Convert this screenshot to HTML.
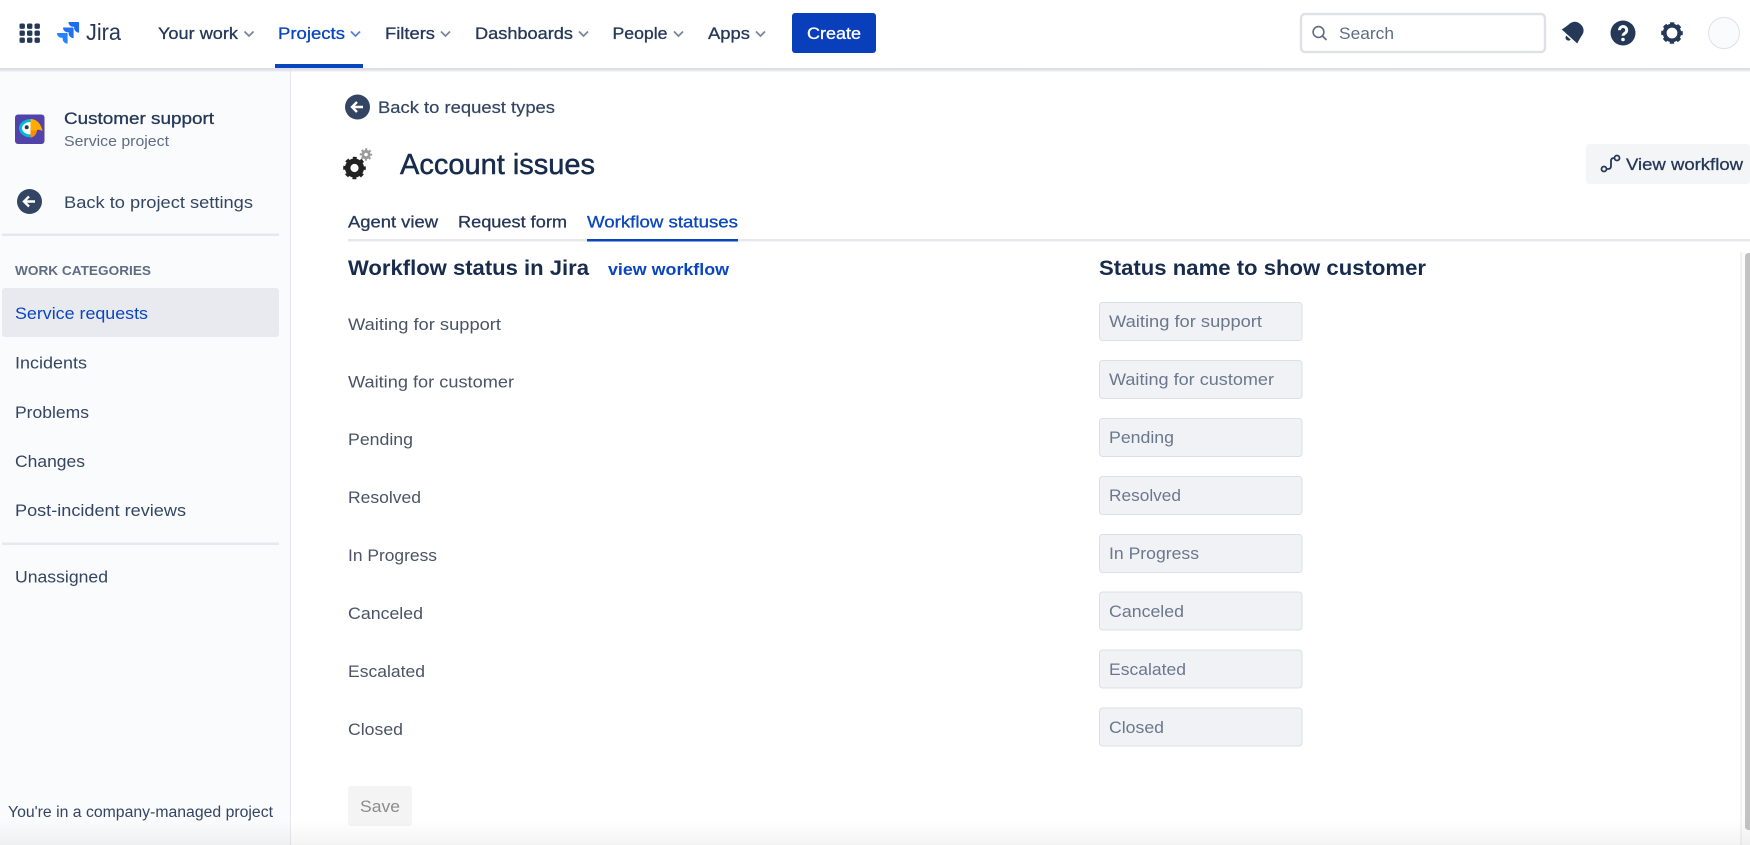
<!DOCTYPE html>
<html lang="en"><head><meta charset="utf-8"><title>Account issues</title>
<style>
html,body{margin:0;padding:0;background:#fff;width:1750px;height:845px;overflow:hidden}
svg{display:block;filter:blur(.3px)}
text{font-family:"Liberation Sans",Arial,sans-serif;font-size:17px;fill:#253858;white-space:pre}
.m{stroke:#253858;stroke-width:.3px}
.b{fill:#0a45c0;stroke:#0a45c0;stroke-width:.3px}
.r{fill:#4a5464}
.i{fill:#6b778c}
.h{font-weight:bold;font-size:21px;fill:#172b4d}
.inp{fill:#f1f2f6;stroke:#dcdfe6;stroke-width:1}
.ch{fill:none;stroke:#7a869a;stroke-width:1.8}
</style></head><body>
<svg xmlns="http://www.w3.org/2000/svg" width="1750" height="845" viewBox="0 0 1750 845">
<defs>
<linearGradient id="sh" x1="0" y1="0" x2="0" y2="1"><stop offset="0" stop-color="#dcdfe5"/><stop offset="1" stop-color="#dcdfe5" stop-opacity="0"/></linearGradient>
<linearGradient id="bt" x1="0" y1="0" x2="0" y2="1"><stop offset="0" stop-color="#000" stop-opacity="0"/><stop offset="1" stop-color="#000" stop-opacity=".045"/></linearGradient>
<path id="jm" d="M0 0H9.6a1 1 0 0 1 1 1V10.6C7.8 10.6 5.6 8.4 5.6 5.6V4.8H4.6C2 4.8 0 2.7 0 0Z"/>
</defs>
<rect width="1750" height="845" fill="#fff"/>
<!-- sidebar -->
<rect x="0" y="68" width="290" height="777" fill="#fafbfc"/>
<rect x="290" y="68" width="1" height="777" fill="#e6e8ec"/>
<!-- header -->
<rect x="0" y="68" width="1750" height="1.5" fill="#dcdfe5"/>
<rect x="0" y="69.5" width="1750" height="3" fill="url(#sh)"/>
<g fill="#253858">
<rect x="19.5" y="23.5" width="5.4" height="5.4" rx="1.6"/><rect x="27" y="23.5" width="5.4" height="5.4" rx="1.6"/><rect x="34.5" y="23.5" width="5.4" height="5.4" rx="1.6"/>
<rect x="19.5" y="30.5" width="5.4" height="5.4" rx="1.6"/><rect x="27" y="30.5" width="5.4" height="5.4" rx="1.6"/><rect x="34.5" y="30.5" width="5.4" height="5.4" rx="1.6"/>
<rect x="19.5" y="37.5" width="5.4" height="5.4" rx="1.6"/><rect x="27" y="37.5" width="5.4" height="5.4" rx="1.6"/><rect x="34.5" y="37.5" width="5.4" height="5.4" rx="1.6"/>
</g>
<use href="#jm" x="68.5" y="22" fill="#1d6cf0"/>
<use href="#jm" x="63" y="27.5" fill="#2072f2"/>
<use href="#jm" x="57" y="33" fill="#2684ff"/>
<text x="86" y="40" textLength="35" lengthAdjust="spacingAndGlyphs" style="font-size:23px">Jira</text>

<text class="m" x="158" y="39" textLength="80" lengthAdjust="spacingAndGlyphs">Your work</text>
<path class="ch" d="M244.500 31.500l4.500 4.500 4.500-4.500"/>
<text class="b" x="278" y="39" textLength="67" lengthAdjust="spacingAndGlyphs">Projects</text>
<path class="ch" style="stroke:#5a82d0" d="M351 31.500l4.500 4.500 4.500-4.500"/>
<text class="m" x="385" y="39" textLength="50" lengthAdjust="spacingAndGlyphs">Filters</text>
<path class="ch" d="M441 31.500l4.500 4.500 4.500-4.500"/>
<text class="m" x="475" y="39" textLength="98" lengthAdjust="spacingAndGlyphs">Dashboards</text>
<path class="ch" d="M579 31.500l4.500 4.500 4.500-4.500"/>
<text class="m" x="612.500" y="39" textLength="55" lengthAdjust="spacingAndGlyphs">People</text>
<path class="ch" d="M674 31.500l4.500 4.500 4.500-4.500"/>
<text class="m" x="708" y="39" textLength="42" lengthAdjust="spacingAndGlyphs">Apps</text>
<path class="ch" d="M756 31.500l4.500 4.500 4.500-4.500"/>
<rect x="275" y="64" width="88" height="4" fill="#0a45c0"/>
<rect x="792" y="13" width="84" height="40" rx="3" fill="#0a3fbc"/>
<text x="807" y="39" textLength="54" lengthAdjust="spacingAndGlyphs" style="fill:#fff;stroke:#fff;stroke-width:.3px">Create</text>

<!-- search -->
<rect x="1301" y="14" width="244" height="38" rx="4" fill="#fff" stroke="#dfe1e6" stroke-width="2.400"/>
<circle cx="1318.500" cy="32" r="5.400" fill="none" stroke="#5e6c84" stroke-width="1.600"/>
<path d="M1322.500 36l4 4" stroke="#5e6c84" stroke-width="1.700" fill="none"/>
<text x="1339" y="39" textLength="55" lengthAdjust="spacingAndGlyphs" style="fill:#5e6c84">Search</text>
<!-- bell -->
<g transform="translate(1573.500 32) rotate(42)" fill="#253858">
<path d="M-10.500 6C-9.500 3-9 0-8.500-3C-8-8-4.500-10.500 0-10.500C4.500-10.500 8-8 8.500-3C9 0 9.500 3 10.500 6Z"/>
<path d="M-3 7.500h6a3 3 0 0 1-6 0Z"/>
</g>
<!-- help -->
<circle cx="1623" cy="33" r="12.500" fill="#253858"/>
<path d="M1619.500 30.200a3.600 3.600 0 1 1 5.600 2.900c-1.300.9-2.100 1.400-2.100 2.700" fill="none" stroke="#fff" stroke-width="2.900"/>
<circle cx="1623" cy="39.500" r="1.800" fill="#fff"/>
<!-- gear -->
<circle cx="1672" cy="33" r="7.300" fill="none" stroke="#253858" stroke-width="3.800"/>
<circle cx="1672" cy="33" r="9.700" fill="none" stroke="#253858" stroke-width="2.200" stroke-dasharray="4.400 3.200" stroke-dashoffset="2.200"/>
<!-- avatar -->
<circle cx="1724" cy="33" r="15.500" fill="#fafbfc" stroke="#dfe1e6" stroke-width="1"/>

<!-- sidebar project -->
<rect x="15" y="114.500" width="29.500" height="29.500" rx="3" fill="#5243aa"/>
<path d="M30.500 119A11.500 9.200 0 0 0 30.500 137.400Z" fill="#00b8d9"/>
<path d="M30.500 122A8.500 6.200 0 0 0 30.500 134.400Z" fill="#fff"/>
<path d="M30.500 119C36 119 41 123 42.500 131C40 129.800 38 129.500 37 130C36.500 134 34 137.400 30.500 137.400Z" fill="#ffab00"/>
<path d="M30.500 130.500H37C36.500 134 34 137.400 30.500 137.400Z" fill="#ff8b00"/>
<circle cx="26.700" cy="127.300" r="2" fill="#253858"/>
<text class="m" x="64" y="124" textLength="150" lengthAdjust="spacingAndGlyphs">Customer support</text>
<text x="64" y="146" textLength="105" lengthAdjust="spacingAndGlyphs" style="font-size:15px;fill:#5e6c84">Service project</text>
<circle cx="29.500" cy="201.500" r="12.500" fill="#344563"/>
<path d="M35 201.500H24.500M29 196.500l-5 5 5 5" fill="none" stroke="#fff" stroke-width="2.400"/>
<text x="64" y="208" textLength="189" lengthAdjust="spacingAndGlyphs" style="fill:#344563">Back to project settings</text>
<rect x="2" y="233.500" width="277" height="2.500" fill="#e6e8ec"/>
<text x="15" y="275" textLength="136" lengthAdjust="spacingAndGlyphs" style="font-size:13px;font-weight:bold;fill:#5e6c84">WORK CATEGORIES</text>
<rect x="2" y="288" width="277" height="49" rx="3" fill="#e9eaef"/>
<text x="15" y="319" textLength="133" lengthAdjust="spacingAndGlyphs" style="fill:#0a45c0">Service requests</text>
<text x="15" y="368.500" textLength="72" lengthAdjust="spacingAndGlyphs" style="fill:#344563">Incidents</text>
<text x="15" y="418" textLength="74" lengthAdjust="spacingAndGlyphs" style="fill:#344563">Problems</text>
<text x="15" y="467" textLength="70" lengthAdjust="spacingAndGlyphs" style="fill:#344563">Changes</text>
<text x="15" y="516" textLength="171" lengthAdjust="spacingAndGlyphs" style="fill:#344563">Post-incident reviews</text>
<rect x="2" y="542.500" width="277" height="2.500" fill="#e6e8ec"/>
<text x="15" y="582.500" textLength="93" lengthAdjust="spacingAndGlyphs" style="fill:#344563">Unassigned</text>
<text x="8" y="817" textLength="265" lengthAdjust="spacingAndGlyphs" style="font-size:15.500px;fill:#344563">You're in a company-managed project</text>

<!-- main -->
<circle cx="357.500" cy="107" r="12.500" fill="#344563"/>
<path d="M363 107H352.500M357 102l-5 5 5 5" fill="none" stroke="#fff" stroke-width="2.400"/>
<text x="378" y="113" textLength="177" lengthAdjust="spacingAndGlyphs" style="fill:#344563;stroke:#344563;stroke-width:.2px">Back to request types</text>

<circle cx="354.500" cy="168" r="6.800" fill="none" stroke="#222" stroke-width="5.400"/>
<circle cx="354.500" cy="168" r="10" fill="none" stroke="#222" stroke-width="2.600" stroke-dasharray="3.900 3.950" stroke-dashoffset="1.950"/>
<circle cx="366" cy="154.500" r="3.200" fill="none" stroke="#9a9a9a" stroke-width="2.800"/>
<circle cx="366" cy="154.500" r="5.300" fill="none" stroke="#9a9a9a" stroke-width="1.800" stroke-dasharray="2.100 2.060" stroke-dashoffset="1"/>
<text x="400" y="174" textLength="195" lengthAdjust="spacingAndGlyphs" style="font-size:29px;fill:#172b4d;stroke:#172b4d;stroke-width:.5px">Account issues</text>

<rect x="1586" y="144" width="164" height="40" rx="3" fill="#f4f5f7"/>
<circle cx="1604" cy="169" r="2.500" fill="none" stroke="#253858" stroke-width="1.800"/>
<circle cx="1617" cy="158" r="2.500" fill="none" stroke="#253858" stroke-width="1.800"/>
<path d="M1606.500 169h1.500q3 0 3-3v-5q0-3 3-3h.5" fill="none" stroke="#253858" stroke-width="1.800"/>
<text class="m" x="1626" y="170" textLength="117" lengthAdjust="spacingAndGlyphs">View workflow</text>

<text class="m" x="348" y="227.500" textLength="90" lengthAdjust="spacingAndGlyphs">Agent view</text>
<text class="m" x="458" y="227.500" textLength="109" lengthAdjust="spacingAndGlyphs">Request form</text>
<text class="b" x="587" y="227.500" textLength="151" lengthAdjust="spacingAndGlyphs">Workflow statuses</text>
<rect x="348" y="239" width="1402" height="2.500" fill="#e6e8ee"/>
<rect x="587" y="239" width="151" height="2.500" fill="#0a45c0"/>

<text class="h" x="348" y="275" textLength="241" lengthAdjust="spacingAndGlyphs">Workflow status in Jira</text>
<text x="608" y="275" textLength="121" lengthAdjust="spacingAndGlyphs" style="font-weight:bold;fill:#0a45c0">view workflow</text>
<text class="h" x="1099" y="275" textLength="327" lengthAdjust="spacingAndGlyphs">Status name to show customer</text>

<text class="r" x="348" y="330" textLength="153" lengthAdjust="spacingAndGlyphs">Waiting for support</text>
<text class="r" x="348" y="387.500" textLength="166" lengthAdjust="spacingAndGlyphs">Waiting for customer</text>
<text class="r" x="348" y="445" textLength="65" lengthAdjust="spacingAndGlyphs">Pending</text>
<text class="r" x="348" y="503" textLength="73" lengthAdjust="spacingAndGlyphs">Resolved</text>
<text class="r" x="348" y="561" textLength="89" lengthAdjust="spacingAndGlyphs">In Progress</text>
<text class="r" x="348" y="619" textLength="75" lengthAdjust="spacingAndGlyphs">Canceled</text>
<text class="r" x="348" y="677" textLength="77" lengthAdjust="spacingAndGlyphs">Escalated</text>
<text class="r" x="348" y="735" textLength="55" lengthAdjust="spacingAndGlyphs">Closed</text>

<rect class="inp" x="1099.500" y="302.500" width="202.500" height="38" rx="3"/>
<rect class="inp" x="1099.500" y="360.500" width="202.500" height="38" rx="3"/>
<rect class="inp" x="1099.500" y="418.500" width="202.500" height="38" rx="3"/>
<rect class="inp" x="1099.500" y="476.500" width="202.500" height="38" rx="3"/>
<rect class="inp" x="1099.500" y="534.500" width="202.500" height="38" rx="3"/>
<rect class="inp" x="1099.500" y="592" width="202.500" height="38" rx="3"/>
<rect class="inp" x="1099.500" y="650" width="202.500" height="38" rx="3"/>
<rect class="inp" x="1099.500" y="708" width="202.500" height="38" rx="3"/>
<text class="i" x="1109" y="327" textLength="153" lengthAdjust="spacingAndGlyphs">Waiting for support</text>
<text class="i" x="1109" y="385" textLength="165" lengthAdjust="spacingAndGlyphs">Waiting for customer</text>
<text class="i" x="1109" y="443" textLength="65" lengthAdjust="spacingAndGlyphs">Pending</text>
<text class="i" x="1109" y="501" textLength="72" lengthAdjust="spacingAndGlyphs">Resolved</text>
<text class="i" x="1109" y="559" textLength="90" lengthAdjust="spacingAndGlyphs">In Progress</text>
<text class="i" x="1109" y="617" textLength="75" lengthAdjust="spacingAndGlyphs">Canceled</text>
<text class="i" x="1109" y="675" textLength="77" lengthAdjust="spacingAndGlyphs">Escalated</text>
<text class="i" x="1109" y="733" textLength="55" lengthAdjust="spacingAndGlyphs">Closed</text>

<rect x="348" y="786" width="64" height="40" rx="3" fill="#f4f4f4"/>
<text x="360" y="812" textLength="40" lengthAdjust="spacingAndGlyphs" style="fill:#8c8c8c">Save</text>

<!-- scrollbar -->
<rect x="1740.500" y="252" width="9.500" height="593" fill="#fbfbfb"/>
<rect x="1740.500" y="252" width="1" height="593" fill="#e6e6e6"/>
<rect x="1745" y="253" width="8" height="577" rx="3.500" fill="#c2c2c2"/>
<!-- bottom fade -->
<rect x="0" y="820" width="1750" height="25" fill="url(#bt)"/>
</svg>
</body></html>
